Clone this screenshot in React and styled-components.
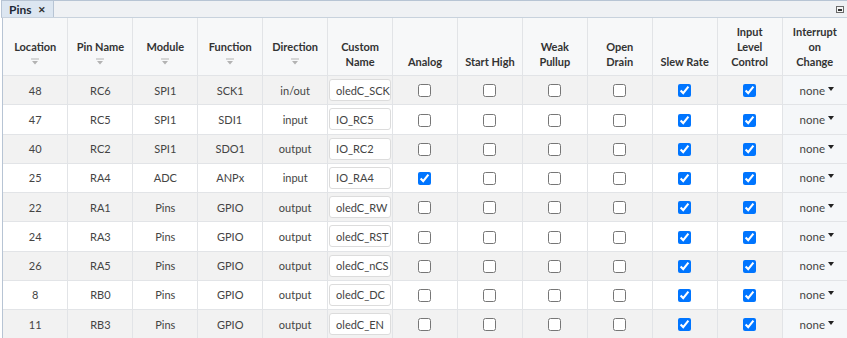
import React from "react";
import styled, { createGlobalStyle } from "styled-components";

const Global = createGlobalStyle`
  html, body { margin: 0; padding: 0; background: #ffffff; }
  body { font-family: Lato, "Noto Sans", sans-serif; font-size: 11px; color: #444; }
`;

const Frame = styled.div`
  width: 847px;
  height: 338px;
  overflow: hidden;
  box-sizing: border-box;
  display: flex;
  flex-direction: column;
`;

const TabBar = styled.div`
  height: 18px;
  box-sizing: border-box;
  display: flex;
  align-items: stretch;
  justify-content: space-between;
  background: #eff1f4;
  border-top: 1px solid #b7c4d4;
  border-bottom: 1px solid #c8d2dd;
  border-left: 1px solid #b7c4d4;
  margin-left: 1px;
`;

const Tab = styled.div`
  display: flex;
  align-items: center;
  gap: 6px;
  padding: 0 7px 0 7px;
  background: #dce6f1;
  border-right: 1px solid #b7c4d4;
  font-weight: 700;
  font-size: 12px;
  color: #1f2a36;
`;

const Close = styled.span`
  font-size: 9px;
  font-weight: 700;
  color: #333;
`;

const MinBtn = styled.div`
  width: 8px;
  height: 7px;
  margin: 5px 3px 0 0;
  border: 1px solid #6a6a6a;
  background: #f4f4f4;
  box-sizing: border-box;
  display: flex;
  align-items: center;
  justify-content: center;
  &::after {
    content: "";
    width: 4px;
    height: 2px;
    background: #333;
  }
`;

const Body = styled.div`
  flex: 1;
  margin-left: 2px;
  border-left: 1px solid #b7c4d4;
  overflow: hidden;
`;

const Table = styled.table`
  width: 844px;
  table-layout: fixed;
  border-collapse: collapse;
  font-size: 11px;
`;

const Th = styled.th`
  height: 51px;
  padding: 0 2px 6px;
  vertical-align: bottom;
  text-align: center;
  font-weight: 700;
  color: #333;
  line-height: 15px;
  background: #f7f8f9;
  border-right: 1px solid #e2e4e7;
  border-bottom: 1px solid #e2e4e7;
  &:last-child { border-right: none; }
`;

const Row = styled.tr`
  background: ${(p) => (p.$alt ? "#f2f2f2" : "#ffffff")};
`;

const Td = styled.td`
  height: 28.25px;
  padding: 0;
  text-align: center;
  vertical-align: middle;
  color: #444;
  border-right: 1px solid #e2e4e7;
  border-bottom: 1px solid #e2e4e7;
  &:last-child { border-right: none; }
`;

const SelectTd = styled(Td)`
  background: #f5f7f9;
  border-left: 1px solid #e2e4e7;
`;

const NameBox = styled.div`
  margin: 0 1px;
  height: 22px;
  box-sizing: border-box;
  border: 1px solid #dcdcdc;
  border-radius: 3px;
  background: #fff;
  display: flex;
  align-items: center;
  padding-left: 6px;
  color: #444;
  white-space: nowrap;
  overflow: hidden;
`;

const Check = styled.input.attrs({ type: "checkbox" })`
  width: 13px;
  height: 13px;
  margin: 0;
  vertical-align: middle;
`;

const Sel = styled.span`
  display: inline-flex;
  align-items: flex-start;
  gap: 3px;
  color: #444;
  font-size: 11.5px;
  padding-left: 4px;
`;

const Caret = styled.span`
  width: 0;
  height: 0;
  margin-top: 3px;
  border-left: 3.5px solid transparent;
  border-right: 3.5px solid transparent;
  border-top: 4px solid #222;
`;

const FilterIcon = styled.svg`
  display: block;
  margin: 4px auto 3px;
`;

const Filter = () => (
  <FilterIcon width="8" height="8" viewBox="0 0 8 8">
    <rect x="0" y="0.5" width="8" height="1" fill="#b3b3b3" />
    <path d="M1 3 L7 3 L4 6.5 Z" fill="#b3b3b3" />
  </FilterIcon>
);

const headers = [
  { t: ["Location"], f: true },
  { t: ["Pin Name"], f: true },
  { t: ["Module"], f: true },
  { t: ["Function"], f: true },
  { t: ["Direction"], f: true },
  { t: ["Custom", "Name"] },
  { t: ["Analog"] },
  { t: ["Start High"] },
  { t: ["Weak", "Pullup"] },
  { t: ["Open", "Drain"] },
  { t: ["Slew Rate"] },
  { t: ["Input", "Level", "Control"] },
  { t: ["Interrupt", "on", "Change"] },
];

const rows = [
  ["48", "RC6", "SPI1", "SCK1", "in/out", "oledC_SCK", false],
  ["47", "RC5", "SPI1", "SDI1", "input", "IO_RC5", false],
  ["40", "RC2", "SPI1", "SDO1", "output", "IO_RC2", false],
  ["25", "RA4", "ADC", "ANPx", "input", "IO_RA4", true],
  ["22", "RA1", "Pins", "GPIO", "output", "oledC_RW", false],
  ["24", "RA3", "Pins", "GPIO", "output", "oledC_RST", false],
  ["26", "RA5", "Pins", "GPIO", "output", "oledC_nCS", false],
  ["8", "RB0", "Pins", "GPIO", "output", "oledC_DC", false],
  ["11", "RB3", "Pins", "GPIO", "output", "oledC_EN", false],
];

export default function App() {
  return (
    <>
      <Global />
      <Frame>
        <TabBar>
          <Tab>
            Pins <Close>✕</Close>
          </Tab>
          <MinBtn />
        </TabBar>
        <Body>
          <Table>
            <thead>
              <tr>
                {headers.map((h, i) => (
                  <Th key={i}>
                    {h.t.map((l, j) => (
                      <div key={j}>{l}</div>
                    ))}
                    {h.f && <Filter />}
                  </Th>
                ))}
              </tr>
            </thead>
            <tbody>
              {rows.map((r, i) => (
                <Row key={i} $alt={i % 2 === 0}>
                  <Td>{r[0]}</Td>
                  <Td>{r[1]}</Td>
                  <Td>{r[2]}</Td>
                  <Td>{r[3]}</Td>
                  <Td>{r[4]}</Td>
                  <Td>
                    <NameBox>{r[5]}</NameBox>
                  </Td>
                  <Td>
                    <Check defaultChecked={r[6]} />
                  </Td>
                  <Td>
                    <Check />
                  </Td>
                  <Td>
                    <Check />
                  </Td>
                  <Td>
                    <Check />
                  </Td>
                  <Td>
                    <Check defaultChecked />
                  </Td>
                  <Td>
                    <Check defaultChecked />
                  </Td>
                  <SelectTd>
                    <Sel>
                      none <Caret />
                    </Sel>
                  </SelectTd>
                </Row>
              ))}
            </tbody>
          </Table>
        </Body>
      </Frame>
    </>
  );
}
